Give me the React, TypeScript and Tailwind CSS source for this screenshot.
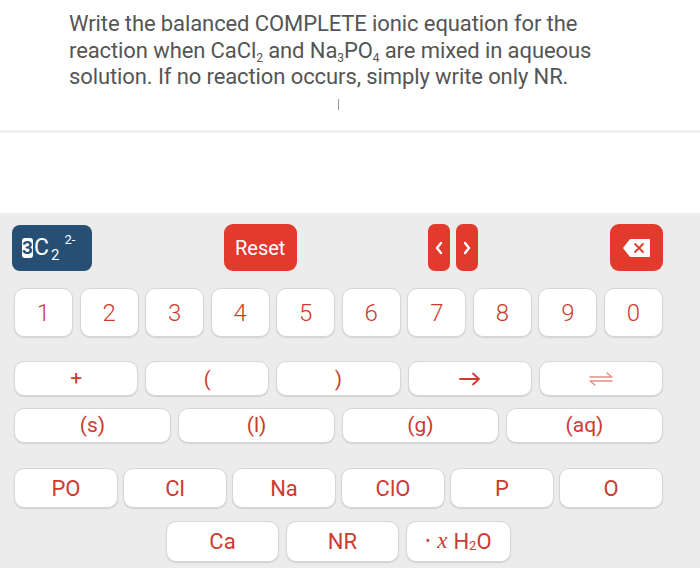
import type { ReactNode } from 'react';

const KEY =
  'flex items-center justify-center rounded-[10px] bg-white border border-[#d6d6d6] shadow-[0_1px_1px_rgba(0,0,0,0.12)] text-[#cc3b30]';

function Key({ className = '', children }: { className?: string; children: ReactNode }) {
  return <div className={`${KEY} ${className}`}>{children}</div>;
}

function Sub({ children, className = '' }: { children: ReactNode; className?: string }) {
  return <span className={`inline-block text-[12px] leading-none translate-y-[4px] ${className}`}>{children}</span>;
}

function DeleteIcon() {
  return (
    <svg width="29" height="20" viewBox="0 0 29 20">
      <path d="M8 1h19a1 1 0 0 1 1 1v16a1 1 0 0 1-1 1H8L1 10z" fill="#fff" />
      <path d="M13 6l8 8M21 6l-8 8" stroke="#e03a2c" strokeWidth="1.8" strokeLinecap="round" />
    </svg>
  );
}

function Chevron({ dir }: { dir: 'left' | 'right' }) {
  return (
    <svg width="10" height="14" viewBox="0 0 10 14" fill="none" stroke="#fff" strokeWidth="2.4" strokeLinecap="round" strokeLinejoin="round">
      <path d={dir === 'left' ? 'M7 2L3 7l4 5' : 'M3 2l4 5-4 5'} />
    </svg>
  );
}

function ArrowIcon() {
  return (
    <svg width="24" height="14" viewBox="0 0 24 14" fill="none" stroke="#cc3b30" strokeWidth="1.8" strokeLinecap="round" strokeLinejoin="round">
      <path d="M2 7h19M15 1.5L21 7l-6 5.5" />
    </svg>
  );
}

function EquilibriumIcon() {
  return (
    <svg width="26" height="14" viewBox="0 0 26 14" fill="none" stroke="#e38f86" strokeWidth="1.4" strokeLinecap="round" strokeLinejoin="round">
      <path d="M2 5h22L19 1M24 9H2l5 4" />
    </svg>
  );
}

export default function App() {
  const digits = ['1', '2', '3', '4', '5', '6', '7', '8', '9', '0'];

  return (
    <div className="w-[700px] h-[572px] bg-white overflow-hidden" style={{ fontFamily: 'Roboto, "Liberation Sans", sans-serif' }}>
      {/* Question */}
      <div className="h-[130px] pl-[69px] pt-[11px]">
        <p className="text-[22px] leading-[26.5px] text-[#555555] tracking-[-0.1px] whitespace-nowrap">
          Write the balanced COMPLETE ionic equation for the
          <br />
          reaction when CaCl<Sub>2</Sub> and Na<Sub>3</Sub>PO<Sub>4</Sub> are mixed in aqueous
          <br />
          solution. If no reaction occurs, simply write only NR.
        </p>
        <div className="ml-[269px] mt-[8px] w-px h-[11px] bg-[#9a9a9a]" />
      </div>
      <div className="h-[3px] bg-[#f1f1f1]" />
      <div className="h-[80px]" />

      {/* Keypad */}
      <div className="h-[355px] bg-[#ececec] pt-[11px]">
        <div className="flex items-center justify-between pl-[12px] pr-[37px]">
          <div className="w-[80px] h-[46px] rounded-[8px] bg-[#264f73] flex items-center pl-[10px] text-white">
            <span className="w-[11px] h-[20px] rounded-[3px] bg-white text-[#264f73] text-[19px] font-bold leading-[20px] flex items-center justify-center">3</span>
            <span className="text-[23px] leading-none ml-[1px]">C</span>
            <span className="text-[15px] leading-none self-end mb-[8px] ml-[2px]">2</span>
            <span className="text-[13px] leading-none self-start mt-[8px] ml-[5px]">2-</span>
          </div>
          <div className="w-[73px] h-[47px] rounded-[9px] bg-[#e23a2d] flex items-center justify-center text-white text-[20px]">
            Reset
          </div>
          <div className="flex gap-[6px]">
            <div className="w-[22px] h-[47px] rounded-[7px] bg-[#e23a2d] flex items-center justify-center">
              <Chevron dir="left" />
            </div>
            <div className="w-[22px] h-[47px] rounded-[7px] bg-[#e23a2d] flex items-center justify-center">
              <Chevron dir="right" />
            </div>
          </div>
          <div className="w-[53px] h-[47px] rounded-[9px] bg-[#e23a2d] flex items-center justify-center">
            <DeleteIcon />
          </div>
        </div>

        <div className="mt-[17px] pl-[14px] pr-[37px] grid grid-cols-10 gap-[6.5px]">
          {digits.map((d) => (
            <Key key={d} className={`h-[49px] text-[24px] font-light ${d === '0' ? 'text-[#9b9b9b]' : ''}`}>
              {d}
            </Key>
          ))}
        </div>

        <div className="mt-[24px] pl-[14px] pr-[37px] grid grid-cols-5 gap-[7px]">
          <Key className="h-[35px] text-[21px]">+</Key>
          <Key className="h-[35px] text-[20px]">(</Key>
          <Key className="h-[35px] text-[20px]">)</Key>
          <Key className="h-[35px]">
            <ArrowIcon />
          </Key>
          <Key className="h-[35px]">
            <EquilibriumIcon />
          </Key>
        </div>

        <div className="mt-[12px] pl-[14px] pr-[37px] grid grid-cols-4 gap-[7px]">
          <Key className="h-[35px] text-[21px]">(s)</Key>
          <Key className="h-[35px] text-[21px]">(l)</Key>
          <Key className="h-[35px] text-[21px]">(g)</Key>
          <Key className="h-[35px] text-[21px]">(aq)</Key>
        </div>

        <div className="mt-[25px] pl-[14px] pr-[37px] grid grid-cols-6 gap-[5px]">
          {['PO', 'Cl', 'Na', 'ClO', 'P', 'O'].map((s) => (
            <Key key={s} className="h-[40px] text-[22px]">
              {s}
            </Key>
          ))}
        </div>

        <div className="mt-[13px] flex justify-center gap-[7px] pr-[23px]">
          <Key className="w-[113px] h-[41px] text-[22px]">Ca</Key>
          <Key className="w-[113px] h-[41px] text-[22px]">NR</Key>
          <Key className="w-[105px] h-[41px] text-[22px]">
            <span className="text-[14px] mr-[7px]">•</span>
            <span className="italic text-[23px] mr-[6px]" style={{ fontFamily: '"Liberation Serif", serif' }}>x</span>
            H<Sub className="text-[13px]">2</Sub>O
          </Key>
        </div>
      </div>
    </div>
  );
}
